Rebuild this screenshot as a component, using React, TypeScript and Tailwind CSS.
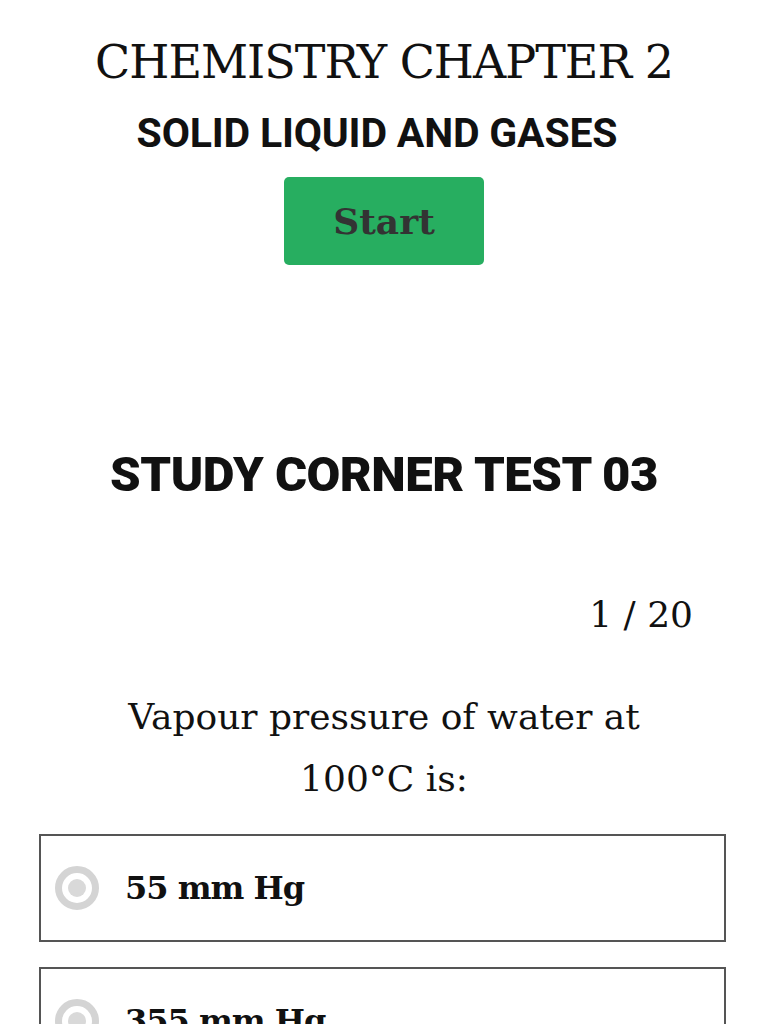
import React from 'react';

const serif = { fontFamily: '"DejaVu Serif", "Liberation Serif", serif' };

const options = ['55 mm Hg', '355 mm Hg', '760 mm Hg', '1 atm'];

const Radio: React.FC = () => (
  <span className="w-[44px] h-[44px] rounded-full border-[7px] border-[#d4d4d4] flex items-center justify-center shrink-0">
    <span className="w-[18px] h-[18px] rounded-full bg-[#d9d9d9]" />
  </span>
);

export default function App() {
  return (
    <div className="h-screen bg-white text-black overflow-hidden">
      <div className="flex flex-col items-center pt-[32px]">
        <h1 className="text-[46px] leading-[60px] font-normal text-[#111] tracking-[-1px]" style={serif}>
          CHEMISTRY CHAPTER 2
        </h1>
        <h2 className="mt-[17px] mr-[14px] text-[41px] leading-[48px] font-bold text-[#111] font-['Roboto',sans-serif] tracking-[-0.2px]">
          SOLID LIQUID AND GASES
        </h2>
        <button className="mt-[20px] w-[200px] h-[88px] rounded-[5px] bg-[#27ae60] text-[#333] text-[36px] font-bold" style={serif}>
          Start
        </button>

        <h2 className="mt-[180px] text-[49px] leading-[60px] font-black text-[#111] font-['Roboto',sans-serif] tracking-[-0.5px]">
          STUDY CORNER TEST 03
        </h2>
      </div>

      <div className="mt-[90px] pr-[75px] text-right text-[36px] leading-[40px] text-[#111]" style={serif}>
        1 / 20
      </div>

      <p className="mt-[51px] px-[100px] text-center text-[36px] leading-[62px] text-[#111]" style={serif}>
        Vapour pressure of water at 100°C is:
      </p>

      <div className="mt-[24px] pl-[39px] pr-[42px] flex flex-col gap-[25px]">
        {options.map((o) => (
          <div key={o} className="h-[108px] border-2 border-[#555] flex items-center gap-[26px] pl-[14px]">
            <Radio />
            <span className="text-[32px] font-bold text-[#111] tracking-[-1px]" style={serif}>
              {o}
            </span>
          </div>
        ))}
      </div>
    </div>
  );
}
